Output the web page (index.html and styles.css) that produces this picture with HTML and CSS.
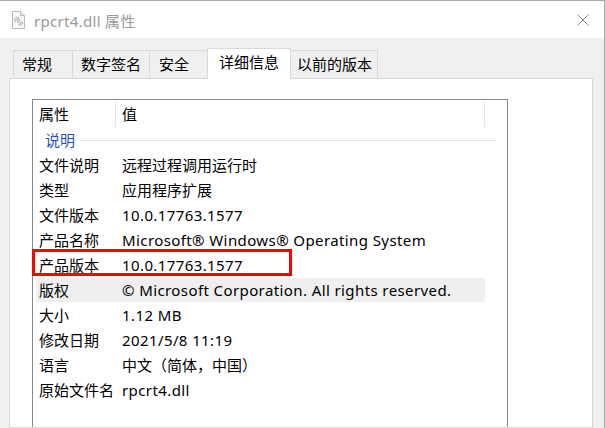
FILE: index.html
```html
<!DOCTYPE html>
<html lang="zh-CN">
<head>
<meta charset="utf-8">
<title>rpcrt4.dll 属性</title>
<link rel="stylesheet" href="styles.css">
</head>
<body>
<div class="window">
  <div class="titlebar">
    <svg class="file-icon" viewBox="0 0 13 18" width="13" height="18">
      <path d="M0.5 0.5 H8.5 L12.5 4.5 V17.5 H0.5 Z" fill="#fbfbfb" stroke="#b8b8b8"/>
      <path d="M8.5 0.5 V4.5 H12.5" fill="#ececec" stroke="#b8b8b8"/>
      <circle cx="5" cy="8.5" r="2.2" fill="none" stroke="#a9a9a9" stroke-width="1.8" stroke-dasharray="1.1 0.9"/>
      <circle cx="5" cy="8.5" r="0.8" fill="#a9a9a9"/>
      <circle cx="8.6" cy="12.3" r="1.8" fill="none" stroke="#a9a9a9" stroke-width="1.6" stroke-dasharray="1 0.8"/>
      <circle cx="8.6" cy="12.3" r="0.6" fill="#a9a9a9"/>
    </svg>
    <span class="title">rpcrt4.dll 属性</span>
    <svg class="close" viewBox="0 0 12 12" width="12" height="12">
      <path d="M0.5 0.5 L11.5 11.5 M11.5 0.5 L0.5 11.5" stroke="#8c8c8c" stroke-width="1" fill="none"/>
    </svg>
  </div>
  <div class="client">
    <div class="tabs">
      <div class="tab tab-general">常规</div>
      <div class="tab tab-sign">数字签名</div>
      <div class="tab tab-security">安全</div>
      <div class="tab tab-active">详细信息</div>
      <div class="tab tab-prev">以前的版本</div>
    </div>
    <div class="panel">
      <div class="listview">
        <div class="lv-header">
          <div class="hcell hcell-name">属性</div>
          <div class="hcell hcell-value">值</div>
        </div>
        <div class="group"><span class="group-title">说明</span><span class="group-line"></span></div>
        <div class="row"><div class="name">文件说明</div><div class="value">远程过程调用运行时</div></div>
        <div class="row"><div class="name">类型</div><div class="value">应用程序扩展</div></div>
        <div class="row"><div class="name">文件版本</div><div class="value latin">10.0.17763.1577</div></div>
        <div class="row"><div class="name">产品名称</div><div class="value latin">Microsoft® Windows® Operating System</div></div>
        <div class="row row-marked"><div class="name">产品版本</div><div class="value latin">10.0.17763.1577</div><div class="mark"></div></div>
        <div class="row row-hot"><div class="name">版权</div><div class="value latin">© Microsoft Corporation. All rights reserved.</div></div>
        <div class="row"><div class="name">大小</div><div class="value latin">1.12 MB</div></div>
        <div class="row"><div class="name">修改日期</div><div class="value latin">2021/5/8 11:19</div></div>
        <div class="row"><div class="name">语言</div><div class="value">中文（简体，中国）</div></div>
        <div class="row"><div class="name">原始文件名</div><div class="value latin">rpcrt4.dll</div></div>
      </div>
    </div>
  </div>
</div>
</body>
</html>
```

FILE: styles.css
```css
* { box-sizing: border-box; }
html, body { margin: 0; padding: 0; }
body {
  width: 605px;
  height: 428px;
  overflow: hidden;
  background: #f0f0f0;
  font-family: "Noto Sans", "Noto Sans CJK SC", sans-serif;
  font-size: 15px;
  color: #000;
}
.window {
  width: 605px;
  height: 428px;
  display: flex;
  flex-direction: column;
  border-top: 1px solid #aaaaaa;
  border-right: 1px solid #aaaaaa;
  background: #f0f0f0;
  overflow: hidden;
}
.titlebar {
  flex: none;
  height: 37px;
  background: #fff;
  display: flex;
  align-items: center;
  padding-left: 12px;
}
.file-icon { flex: none; display: block; }
.title {
  margin-left: 9px;
  color: #999;
  font-size: 15px;
  line-height: 20px;
  padding-top: 2px;
  letter-spacing: 0.3px;
}
.close { margin-left: auto; margin-right: 15px; display: block; }

.client {
  flex: 1;
  display: flex;
  flex-direction: column;
  min-height: 0;
}
.tabs {
  flex: none;
  display: flex;
  align-items: flex-end;
  height: 30px;
  margin-top: 10px;
  margin-left: 13px;
}
.tab {
  height: 28px;
  line-height: 27px;
  padding-left: 8px;
  border-top: 1px solid #d9d9d9;
  border-left: 1px solid #d9d9d9;
  background: #f0f0f0;
  white-space: nowrap;
}
.tab-general { width: 59px; }
.tab-sign { width: 77px; }
.tab-security { width: 58px; padding-left: 9px; }
.tab-active {
  width: 84px;
  height: 31px;
  margin-bottom: -1px;
  padding-left: 11px;
  line-height: 26px;
  border-right: 1px solid #d9d9d9;
  background: #fff;
  position: relative;
  z-index: 1;
}
.tab-prev {
  width: 87px;
  padding-left: 6px;
  border-left: none;
  border-right: 1px solid #d9d9d9;
}

.panel {
  flex: 1;
  min-height: 0;
  margin-left: 9px;
  width: 584px;
  background: #fff;
  border: 1px solid #d9d9d9;
  padding: 20px 0 0 22px;
  overflow: hidden;
}
.listview {
  width: 476px;
  height: 360px;
  border: 1px solid #828790;
  background: #fff;
}
.lv-header {
  display: flex;
  height: 27px;
  padding-top: 2px;
}
.hcell {
  height: 25px;
  line-height: 24px;
  padding-left: 6px;
  border-right: 1px solid #e5e5e5;
}
.hcell-name { width: 83px; }
.hcell-value { width: 369px; }

.group {
  display: flex;
  align-items: center;
  height: 26px;
  padding-left: 12px;
}
.group-title {
  color: #1f4fb5;
  line-height: 26px;
}
.group-line {
  width: 416px;
  height: 1px;
  margin-left: 5px;
  background: #dde4ee;
}

.row {
  display: flex;
  height: 25px;
  line-height: 25px;
  white-space: nowrap;
}
.name { width: 83px; padding-left: 6px; }
.value { padding-left: 6px; }
.latin { letter-spacing: 0.4px; }
.row-hot {
  background: linear-gradient(#efefef, #efefef) 3px 0 / 449px 24px no-repeat;
}
.row-marked { position: relative; }
.mark {
  position: absolute;
  left: -1px;
  top: -4px;
  width: 260px;
  height: 27px;
  border: 3px solid #f00;
}
```
